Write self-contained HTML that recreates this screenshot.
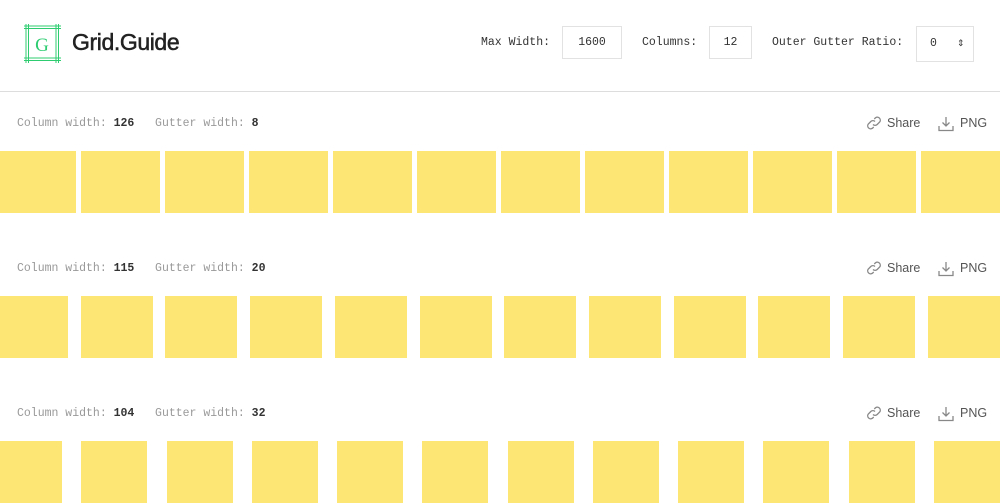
<!DOCTYPE html>
<html><head><meta charset="utf-8"><style>
*{margin:0;padding:0;box-sizing:border-box}
body{width:1000px;height:496px;overflow:hidden;background:#fff;font-family:"Liberation Mono",monospace;position:relative}
.hdr{position:absolute;left:0;top:0;width:1000px;height:92px;border-bottom:1px solid #ddd}
.logo{position:absolute;left:24px;top:24px}
.title{position:absolute;left:72px;top:29px;font-family:"Liberation Sans",sans-serif;font-size:23px;color:#222;letter-spacing:-0.4px;-webkit-text-stroke:0.5px #222}
.lbl{position:absolute;top:36px;font-size:11.5px;color:#333}
.inp{position:absolute;top:26px;height:33px;border:1px solid #e2e2e2;font-size:11.5px;color:#333;text-align:center;line-height:31px}
.info{position:absolute;left:17px;font-size:11.5px;color:#999}
.info b{color:#333;font-weight:bold}
.act{position:absolute;font-family:"Liberation Sans",sans-serif;font-size:12.5px;color:#555}
.row{position:absolute;display:flex;justify-content:space-between;height:62px}
.row div{background:#fde674;height:62px}
</style></head><body>
<div class="hdr">
<svg class="logo" width="37" height="39" viewBox="0 0 37 39" fill="none" stroke="#2ecc71" stroke-width="1">
<line x1="2" y1="0" x2="2" y2="39"/><line x1="4.5" y1="0" x2="4.5" y2="39"/>
<line x1="32" y1="0" x2="32" y2="39"/><line x1="34.5" y1="0" x2="34.5" y2="39"/>
<line x1="0" y1="2" x2="37" y2="2"/><line x1="0" y1="4.5" x2="37" y2="4.5"/>
<line x1="0" y1="34" x2="37" y2="34"/><line x1="0" y1="36.5" x2="37" y2="36.5"/>
<text x="18" y="27" font-family="Liberation Serif" font-size="19" fill="#2ecc71" stroke="none" text-anchor="middle">G</text>
</svg>
<div class="title">Grid.Guide</div>
<div class="lbl" style="left:481px">Max Width:</div>
<div class="inp" style="left:562px;width:60px">1600</div>
<div class="lbl" style="left:642px">Columns:</div>
<div class="inp" style="left:709px;width:43px">12</div>
<div class="lbl" style="left:772px">Outer Gutter Ratio:</div>
<div class="inp" style="left:916px;width:58px;height:36px;line-height:34px;text-align:left;padding-left:13px">0<span style="position:absolute;left:40px;font-size:9px">&#8661;</span></div>
</div>

<div class="info" style="top:117px">Column width: <b>126</b>&nbsp;&nbsp; Gutter width: <b>8</b></div>
<div class="info" style="top:262px">Column width: <b>115</b>&nbsp;&nbsp; Gutter width: <b>20</b></div>
<div class="info" style="top:407px">Column width: <b>104</b>&nbsp;&nbsp; Gutter width: <b>32</b></div>

<svg style="position:absolute;left:866px;top:115px" width="16" height="16" viewBox="0 0 16 16" fill="none" stroke="#888" stroke-width="1.3"><path d="M7 9.5a3 3 0 0 0 4.2 0l2.5-2.5a3 3 0 0 0-4.2-4.2L8.3 4M9 6.5a3 3 0 0 0-4.2 0L2.3 9a3 3 0 0 0 4.2 4.2L7.7 12"/></svg>
<div class="act" style="left:887px;top:116px">Share</div>
<svg style="position:absolute;left:938px;top:116px" width="16" height="16" viewBox="0 0 16 16" fill="none" stroke="#888" stroke-width="1.3"><path d="M8 1v9M4.5 6.5L8 10l3.5-3.5M1 10v4.5h14V10"/></svg>
<div class="act" style="left:960px;top:116px">PNG</div>

<svg style="position:absolute;left:866px;top:260px" width="16" height="16" viewBox="0 0 16 16" fill="none" stroke="#888" stroke-width="1.3"><path d="M7 9.5a3 3 0 0 0 4.2 0l2.5-2.5a3 3 0 0 0-4.2-4.2L8.3 4M9 6.5a3 3 0 0 0-4.2 0L2.3 9a3 3 0 0 0 4.2 4.2L7.7 12"/></svg>
<div class="act" style="left:887px;top:261px">Share</div>
<svg style="position:absolute;left:938px;top:261px" width="16" height="16" viewBox="0 0 16 16" fill="none" stroke="#888" stroke-width="1.3"><path d="M8 1v9M4.5 6.5L8 10l3.5-3.5M1 10v4.5h14V10"/></svg>
<div class="act" style="left:960px;top:261px">PNG</div>

<svg style="position:absolute;left:866px;top:405px" width="16" height="16" viewBox="0 0 16 16" fill="none" stroke="#888" stroke-width="1.3"><path d="M7 9.5a3 3 0 0 0 4.2 0l2.5-2.5a3 3 0 0 0-4.2-4.2L8.3 4M9 6.5a3 3 0 0 0-4.2 0L2.3 9a3 3 0 0 0 4.2 4.2L7.7 12"/></svg>
<div class="act" style="left:887px;top:406px">Share</div>
<svg style="position:absolute;left:938px;top:406px" width="16" height="16" viewBox="0 0 16 16" fill="none" stroke="#888" stroke-width="1.3"><path d="M8 1v9M4.5 6.5L8 10l3.5-3.5M1 10v4.5h14V10"/></svg>
<div class="act" style="left:960px;top:406px">PNG</div>

<div class="row" style="left:-3px;width:1003px;top:151px">
<div style="width:79px"></div><div style="width:79px"></div><div style="width:79px"></div><div style="width:79px"></div><div style="width:79px"></div><div style="width:79px"></div><div style="width:79px"></div><div style="width:79px"></div><div style="width:79px"></div><div style="width:79px"></div><div style="width:79px"></div><div style="width:79px"></div>
</div>
<div class="row" style="left:-4px;width:1004px;top:296px">
<div style="width:72px"></div><div style="width:72px"></div><div style="width:72px"></div><div style="width:72px"></div><div style="width:72px"></div><div style="width:72px"></div><div style="width:72px"></div><div style="width:72px"></div><div style="width:72px"></div><div style="width:72px"></div><div style="width:72px"></div><div style="width:72px"></div>
</div>
<div class="row" style="left:-4px;width:1004px;top:441px">
<div style="width:66px"></div><div style="width:66px"></div><div style="width:66px"></div><div style="width:66px"></div><div style="width:66px"></div><div style="width:66px"></div><div style="width:66px"></div><div style="width:66px"></div><div style="width:66px"></div><div style="width:66px"></div><div style="width:66px"></div><div style="width:66px"></div>
</div>
</body></html>
